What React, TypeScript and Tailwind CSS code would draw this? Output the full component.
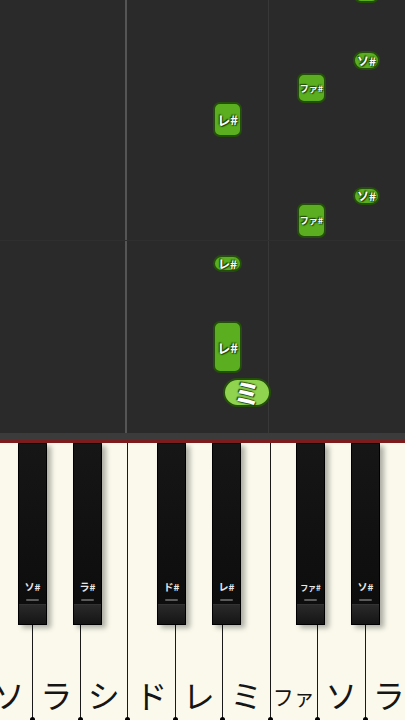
import React from 'react';

type Note = { x: number; y: number; w: number; h: number; label: string; size: number; pill?: boolean; active?: boolean };

const notes: Note[] = [
  { x: 354, y: -20, w: 25, h: 23, label: '', size: 11 },
  { x: 353, y: 51, w: 27, h: 19, label: 'ソ#', size: 12, pill: true },
  { x: 297, y: 73, w: 29, h: 30, label: 'ファ#', size: 9 },
  { x: 213, y: 102, w: 29, h: 35, label: 'レ#', size: 13 },
  { x: 353, y: 187, w: 27, h: 18, label: 'ソ#', size: 12, pill: true },
  { x: 297, y: 203, w: 29, h: 35, label: 'ファ#', size: 9 },
  { x: 213, y: 255, w: 29, h: 17, label: 'レ#', size: 12, pill: true },
  { x: 213, y: 321, w: 29, h: 52, label: 'レ#', size: 13 },
  { x: 223, y: 378, w: 48, h: 29, label: 'ミ', size: 27, pill: true, active: true },
];

const whiteKeys = [
  { label: 'ソ', small: false },
  { label: 'ラ', small: false },
  { label: 'シ', small: false },
  { label: 'ド', small: false },
  { label: 'レ', small: false },
  { label: 'ミ', small: false },
  { label: 'ファ', small: true },
  { label: 'ソ', small: false },
  { label: 'ラ', small: false },
];

const blackKeys = [
  { x: 18, label: 'ソ#' },
  { x: 73, label: 'ラ#' },
  { x: 157, label: 'ド#' },
  { x: 212, label: 'レ#' },
  { x: 296, label: 'ファ#' },
  { x: 351, label: 'ソ#' },
];

const font = { fontFamily: '"Noto Sans CJK JP", "Noto Sans", sans-serif' };

function NoteBlock({ n }: { n: Note }) {
  return (
    <div
      className={`absolute flex items-center justify-center border-2 border-[#244f0b] font-bold text-white [text-shadow:0_0_2px_#1c4406,1px_1px_1px_#1c4406,-1px_-1px_1px_#1c4406] ${
        n.active ? 'bg-[#8fd34f]' : 'bg-[#5aae1f]'
      } ${n.pill ? 'rounded-full' : 'rounded-[7px]'}`}
      style={{ left: n.x, top: n.y, width: n.w, height: n.h, fontSize: n.size, lineHeight: 1 }}
    >
      {n.label}
    </div>
  );
}

export default function App() {
  return (
    <div className="w-[405px] h-[720px] overflow-hidden flex flex-col bg-[#2a2a2a]" style={font}>
      {/* piano roll */}
      <div className="relative h-[433px] flex">
        <div className="w-[127px] h-full border-r-2 border-[#555555]" />
        <div className="w-[142px] h-full border-r border-[#383838]" />
        <div className="flex-1 h-full" />
        <div className="absolute left-0 right-0 top-[240px] h-px bg-[#2f2f2f]" />
        {notes.map((n, i) => (
          <NoteBlock key={i} n={n} />
        ))}
      </div>
      <div className="h-[7px] bg-[#3b3b3b]" />
      <div className="h-[3px] bg-[#7d1c1c]" />

      {/* keyboard */}
      <div className="relative flex-1 overflow-hidden bg-[#faf9ec]">
        <div className="flex h-full ml-[-14.5px]">
          {whiteKeys.map((k, i) => (
            <div
              key={i}
              className="relative w-[47.5px] shrink-0 h-full border-r border-[#1a1a1a] flex items-end justify-center"
            >
              <span
                className={`text-[#151515] leading-none ${k.small ? 'text-[21px] mb-[13px]' : 'text-[32px] mb-[10px]'}`}
              >
                {k.label}
              </span>
              <div className="absolute right-[-3px] bottom-[-2px] w-[5px] h-[5px] rounded-full bg-black" />
            </div>
          ))}
        </div>
        {blackKeys.map((b, i) => (
          <div
            key={i}
            className="absolute top-0 w-[29px] h-[182px] bg-gradient-to-b from-[#161616] to-[#0c0c0c] border border-black shadow-[4px_3px_5px_rgba(0,0,0,0.3)] flex flex-col items-center"
            style={{ left: b.x }}
          >
            <div className="flex-1" />
            <span
              className={`text-[#e8e8e8] font-bold leading-none mb-[7px] ${b.label.length > 2 ? 'text-[8px]' : 'text-[10px]'}`}
            >
              {b.label}
            </span>
            <div className="w-[13px] h-[2px] bg-[#5a5a5a] rounded-full mb-[3px]" />
            <div className="w-full h-[20px] bg-gradient-to-b from-[#2a2a2a] to-[#151515] border-t border-[#333]" />
          </div>
        ))}
      </div>
    </div>
  );
}
